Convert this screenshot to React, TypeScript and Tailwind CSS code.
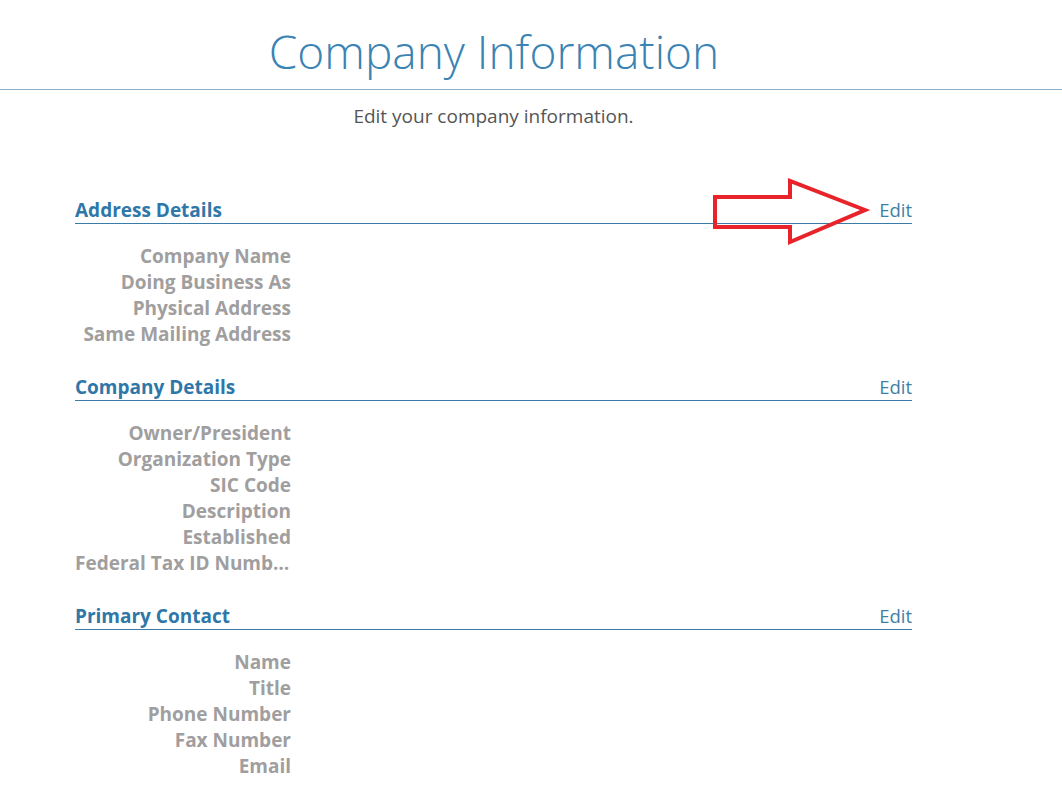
import React from "react";

const sections: { title: string; labels: string[] }[] = [
  { title: "Address Details", labels: ["Company Name", "Doing Business As", "Physical Address", "Same Mailing Address"] },
  { title: "Company Details", labels: ["Owner/President", "Organization Type", "SIC Code", "Description", "Established", "Federal Tax ID Number"] },
  { title: "Primary Contact", labels: ["Name", "Title", "Phone Number", "Fax Number", "Email"] },
];

export default function App() {
  return (
    <div className="relative w-full min-h-[789px] bg-white" style={{ fontFamily: '"Open Sans", "Noto Sans", sans-serif' }}>
      <div className="w-[988px]">
        <h1 className="text-center text-[46px] font-light leading-[60px] pt-[21px] pb-[8px] text-[#3a83b3]">Company Information</h1>
      </div>
      <div className="h-px w-full bg-[#8fb3c9]" />
      <div className="w-[987px]">
        <p className="text-center text-[19px] leading-[26px] mt-[13px] text-[#555555]">Edit your company information.</p>
        <div className="px-[75px] mt-[69px] flex flex-col gap-[28px]">
          {sections.map((s) => (
            <div key={s.title}>
              <div className="flex items-end justify-between border-b border-[#3a7ca8] pb-[1px]">
                <span className="text-[19px] font-bold leading-[24px] text-[#2e77a8]">{s.title}</span>
                <span className="text-[18.5px] leading-[24px] text-[#3f7fa6]">Edit</span>
              </div>
              <div className="mt-[19px] flex flex-col">
                {s.labels.map((l) => (
                  <div key={l} className="w-[216px] truncate text-right text-[19px] font-bold leading-[26px] text-[#a09e9e]">
                    {l}
                  </div>
                ))}
              </div>
            </div>
          ))}
        </div>
      </div>
      <svg className="absolute left-0 top-0 pointer-events-none" width="1062" height="789">
        <path d="M715 197 L790 197 L790 181 L865 210 L790 242 L790 227 L715 227 Z" fill="none" stroke="#e8232a" strokeWidth="4" strokeLinejoin="miter" />
      </svg>
    </div>
  );
}
